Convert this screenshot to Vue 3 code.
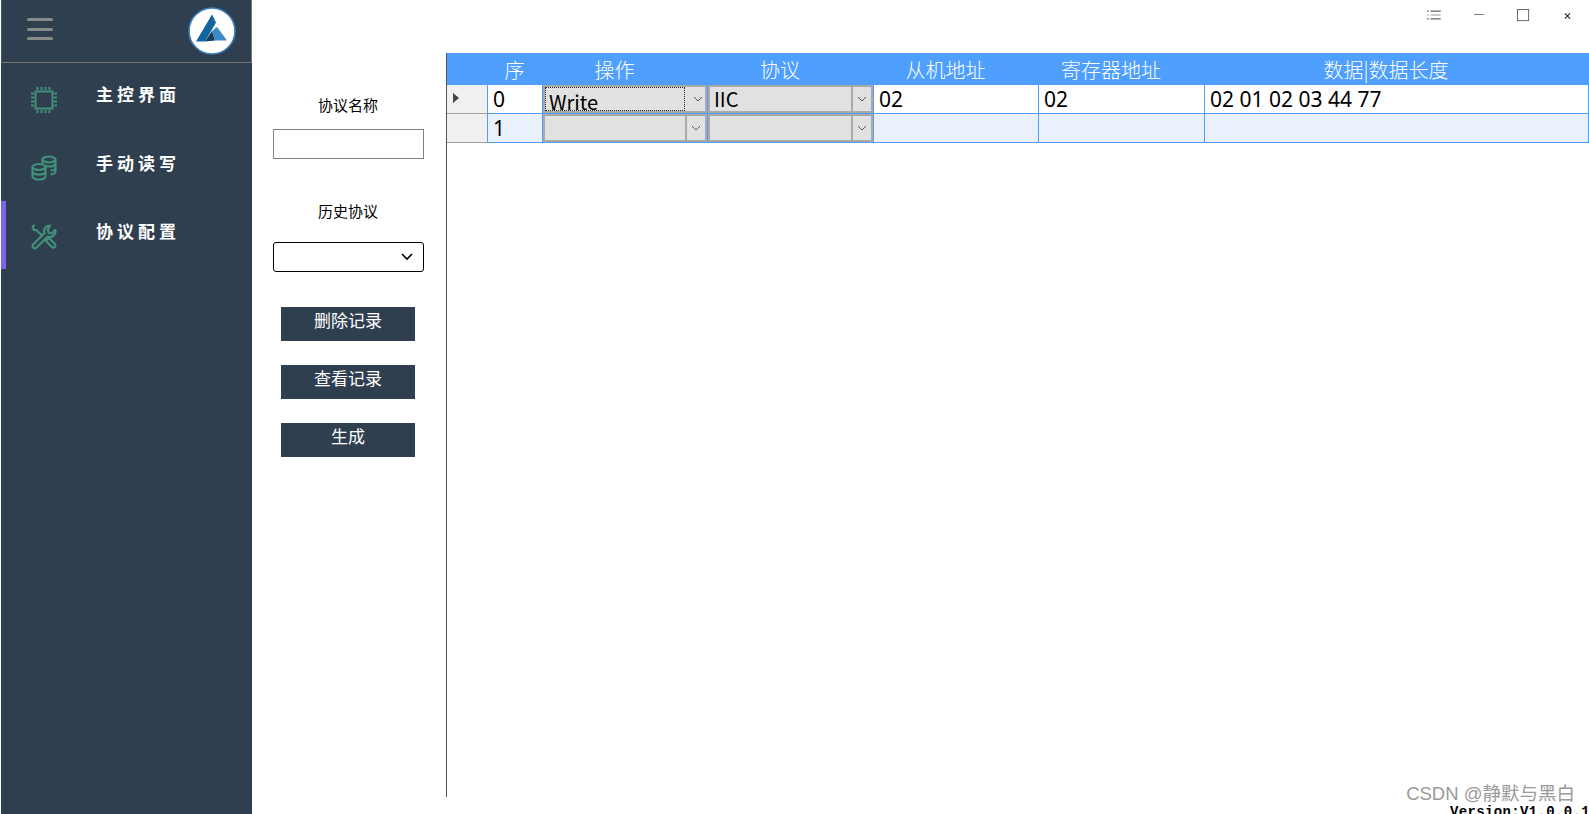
<script setup>
const navItems = [
  { label: '主控界面', icon: 'chip' },
  { label: '手动读写', icon: 'coins' },
  { label: '协议配置', icon: 'tools', active: true }
]
const headers = [
  { text: '', cls: '' },
  { text: '序', cls: 'nudge' },
  { text: '操作', cls: 'shift' },
  { text: '协议', cls: 'shift' },
  { text: '从机地址', cls: 'shift' },
  { text: '寄存器地址', cls: 'shift' },
  { text: '数据|数据长度', cls: 'shift' }
]
const rows = [
  { seq: '0', op: 'Write', proto: 'IIC', slave: '02', reg: '02', data: '02 01 02 03 44 77', current: true },
  { seq: '1', op: '', proto: '', slave: '', reg: '', data: '', current: false }
]
const buttons = ['删除记录', '查看记录', '生成']
const ticks = [6.5, 10.5, 14.5, 18.5]
</script>

<template>
  <div class="app">
    <aside class="sidebar">
      <div class="brand">
        <div class="burger"><i></i><i></i><i></i></div>
        <svg class="logo" viewBox="0 0 48 48" width="48" height="48">
          <circle cx="24" cy="24" r="23" fill="#fff" stroke="#3a80bd" stroke-width="1.6" />
          <polygon points="24,7.500 28,15.500 17,34.500 8,34.500" fill="#14659f" />
          <polygon points="29,20 39,33.500 27,33.500 24,24" fill="#3d88c7" />
          <polygon points="24,24 27,33.500 17,34.500" fill="#123c60" />
        </svg>
      </div>
      <nav>
        <div v-for="item in navItems" :key="item.label" class="nav-item" :class="{ active: item.active }">
          <span class="nav-icon">
            <svg v-if="item.icon === 'chip'" viewBox="0 0 26 26" width="26" height="26" fill="none" stroke="#42917a" stroke-width="2">
              <rect x="4.500" y="4.500" width="17" height="17" />
              <g v-for="t in ticks" :key="t">
                <path :d="`M${t} 0v3M${t} 23v3M0 ${t}h3M23 ${t}h3`" />
              </g>
            </svg>
            <svg v-else-if="item.icon === 'coins'" viewBox="0 0 26 26" width="26" height="26" fill="none" stroke="#42917a" stroke-width="2.200">
              <ellipse cx="18" cy="4.500" rx="6.500" ry="3" />
              <path d="M11.500 4.500v4.500M24.500 4.500v12c0 1.500-2 2.700-5 3M24.500 8.500c0 1.700-3 3-6.500 3-1 0-2-.1-3-.3M24.500 12.500c0 1.700-2.500 3-5 3" />
              <ellipse cx="8" cy="12" rx="6.500" ry="3" />
              <path d="M1.500 12v9.500c0 1.700 3 3 6.500 3s6.500-1.300 6.500-3V12M1.500 16.500c0 1.700 3 3 6.500 3s6.500-1.300 6.500-3" />
            </svg>
            <svg v-else viewBox="0 0 26 26" width="26" height="26" fill="none" stroke="#42917a" stroke-width="2.200" stroke-linejoin="round" stroke-linecap="round">
              <path d="M19 1.500a5.500 5.500 0 0 0-5.500 7.500L2.200 20.500a2.200 2.200 0 0 0 3.200 3.200L16.800 12.500a5.500 5.500 0 0 0 7.500-6.500l-3.500 3.500-3.200-.8-.8-3.200z" />
              <path d="M3 1.500 1.500 3l1.500 3 2.500.2L11 11.500M15 17l3-3 5.800 6a2.100 2.100 0 0 1-3 3z" />
            </svg>
          </span>
          <span class="nav-label">{{ item.label }}</span>
        </div>
      </nav>
    </aside>

    <section class="form-panel">
      <label class="form-label first">协议名称</label>
      <input class="name-input" type="text" />
      <label class="form-label second">历史协议</label>
      <div class="history-select">
        <svg viewBox="0 0 12 8" width="12" height="8" fill="none" stroke="#000" stroke-width="1.600"><path d="M1 1l5 5 5-5" /></svg>
      </div>
      <div class="actions">
        <button v-for="b in buttons" :key="b" class="action" type="button">{{ b }}</button>
      </div>
    </section>

    <main class="main">
      <div class="titlebar">
        <svg viewBox="0 0 16 12" width="16" height="12" fill="none" stroke-width="1">
          <path d="M0 1.500h2M4 1.500h12M0 10.500h2M4 10.500h12" stroke="#222" />
          <path d="M0 6h2M4 6h12" stroke="#bbb" stroke-width="2" />
        </svg>
        <svg viewBox="0 0 12 2" width="12" height="2"><rect width="12" height="1" fill="#666" /></svg>
        <svg viewBox="0 0 15 15" width="15" height="15" fill="none"><rect x=".5" y=".5" width="13" height="13" stroke="#555" /></svg>
        <svg viewBox="0 0 8 8" width="8" height="8" fill="none" stroke="#222" stroke-width="1.200"><path d="M1 1l6 6M7 1l-6 6" /></svg>
      </div>
      <div class="grid-area">
        <div class="grid header-row">
          <div v-for="(h, i) in headers" :key="i" class="head-cell" :class="h.cls">{{ h.text }}</div>
        </div>
        <div v-for="row in rows" :key="row.seq" class="grid body-row" :class="{ alt: !row.current }">
          <div class="row-head" :class="{ current: row.current }">
            <svg v-if="row.current" viewBox="0 0 6 10" width="6" height="10"><path d="M0 0l6 5-6 5z" fill="#444" /></svg>
          </div>
          <div class="cell">{{ row.seq }}</div>
          <div class="combo-cell">
            <div class="combo">
              <span class="combo-text" :class="{ focused: row.current }">{{ row.op }}</span>
              <span class="combo-btn" :class="{ plain: row.current }">
                <svg viewBox="0 0 10 6" width="10" height="6" fill="none" stroke="#555"><path d="M1 1l4 4 4-4" /></svg>
              </span>
            </div>
          </div>
          <div class="combo-cell">
            <div class="combo">
              <span class="combo-text proto">{{ row.proto }}</span>
              <span class="combo-btn">
                <svg viewBox="0 0 10 6" width="10" height="6" fill="none" stroke="#555"><path d="M1 1l4 4 4-4" /></svg>
              </span>
            </div>
          </div>
          <div class="cell">{{ row.slave }}</div>
          <div class="cell">{{ row.reg }}</div>
          <div class="cell">{{ row.data }}</div>
        </div>
      </div>
    </main>

    <div class="watermark">CSDN @静默与黑白</div>
    <div class="version">Version:V1.0.0.1</div>
  </div>
</template>

<style>
html, body { margin: 0; overflow: hidden; background: #fff; }
</style>

<style scoped>
.app {
  position: relative;
  display: flex;
  height: 814px;
  width: 1589px;
  overflow: hidden;
  background: #fff;
  font-family: "Noto Sans CJK SC", "Noto Sans", sans-serif;
  color: #000;
}
.sidebar {
  flex: none;
  width: 251px;
  margin-left: 1px;
  background: #2f3f4f;
}
.brand {
  height: 63px;
  box-sizing: border-box;
  display: flex;
  align-items: center;
  justify-content: space-between;
  padding: 0 15px 4px 25px;
  border-left: 1px solid #4a5866;
  border-right: 1px solid #777;
  border-bottom: 1px solid #777;
}
.burger { display: flex; flex-direction: column; gap: 6.500px; width: 26px; }
.burger i { display: block; height: 3px; border-radius: 2px; background: #8a8a8a; }
.logo { display: block; margin-top: 3px; }
nav { display: flex; flex-direction: column; }
.nav-item {
  height: 68.500px;
  display: flex;
  align-items: center;
  padding-left: 30px;
  position: relative;
}
.nav-item.active::before {
  content: "";
  position: absolute;
  left: 0;
  top: 1px;
  bottom: 0;
  width: 5px;
  background: #7b66e8;
}
.nav-icon { display: flex; width: 26px; height: 26px; margin-top: 5px; }
.nav-label {
  margin-left: 39px;
  margin-top: -7px;
  font-size: 17px;
  font-weight: 700;
  letter-spacing: 4px;
  color: #fff;
  white-space: nowrap;
  font-family: "Liberation Serif", "Noto Sans CJK SC", serif;
}
.form-panel {
  flex: none;
  width: 194px;
  display: flex;
  flex-direction: column;
  align-items: center;
  padding-right: 2px;
  box-sizing: border-box;
}
.form-label { font-size: 15px; line-height: 20px; }
.form-label.first { margin-top: 95px; }
.form-label.second { margin-top: 42px; }
.name-input {
  width: 151px;
  height: 30px;
  box-sizing: border-box;
  margin: 14px 0 0;
  border: 1px solid #808080;
  border-radius: 0;
  outline: none;
  background: #fff;
  padding: 0;
}
.history-select {
  width: 151px;
  height: 30px;
  box-sizing: border-box;
  margin-top: 21px;
  border: 1px solid #000;
  border-radius: 3px;
  display: flex;
  align-items: center;
  justify-content: flex-end;
  padding-right: 10px;
}
.actions { display: flex; flex-direction: column; gap: 24px; margin-top: 35px; }
.action {
  width: 134px;
  height: 34px;
  border: 0;
  padding: 0 0 8px;
  background: #2f3f4f;
  color: #fff;
  font-family: inherit;
  font-size: 17px;
  line-height: 22px;
}
.main {
  flex: 1;
  min-width: 0;
  height: 797px;
  box-sizing: border-box;
  border-left: 1px solid #555;
  display: flex;
  flex-direction: column;
  position: relative;
}
.titlebar {
  height: 53px;
  flex: none;
  display: flex;
  align-items: flex-start;
  background: #fff;
  margin-left: -2px;
  padding: 8px 18px 0 982px;
  box-sizing: border-box;
  gap: 33px;
}
.titlebar svg:nth-child(1) { margin-top: 1px; }
.titlebar svg:nth-child(2) { margin-top: 6px; }
.titlebar svg:nth-child(4) { margin-top: 4px; margin-left: 1px; }
.grid {
  display: grid;
  grid-template-columns: 41px 55px 165px 166px 165px 166px 1fr;
}
.header-row { height: 32px; background: #4f9fff; }
.head-cell {
  color: #fff;
  font-size: 20px;
  font-weight: 300;
  line-height: 34px;
  height: 32px;
  text-align: center;
  white-space: nowrap;
}
.head-cell.shift { padding-right: 22px; }
.head-cell.nudge { padding-right: 2px; }
.body-row { height: 29px; background: #fff; }
.body-row.alt { background: #e8f1fc; }
.row-head {
  background: #f0f0f0;
  border-bottom: 1px solid #a0a0a0;
  border-right: 1px solid #4f9fff;
  display: flex;
  align-items: center;
  padding-left: 6px;
  box-sizing: border-box;
}
.row-head.current { padding-bottom: 2px; }
.cell {
  box-sizing: border-box;
  border-right: 1px solid #4f9fff;
  border-bottom: 1px solid #4f9fff;
  padding-left: 5px;
  line-height: 29px;
  height: 29px;
  font-family: "Noto Sans", "Noto Sans CJK SC", sans-serif;
  font-size: 21px;
  white-space: nowrap;
}
.combo-cell {
  box-sizing: border-box;
  border-right: 1px solid #4f9fff;
  border-bottom: 1px solid #4f9fff;
  background: inherit;
}
.combo {
  box-sizing: border-box;
  height: 28px;
  border: 2px solid #a9a9a9;
  background: #e1e1e1;
  display: flex;
  align-items: stretch;
}
.combo-text {
  flex: 1;
  box-sizing: border-box;
  padding-left: 4px;
  font-family: "Noto Sans CJK SC", "Noto Sans", sans-serif;
  font-size: 20px;
  line-height: 24px;
  white-space: nowrap;
}
.combo-text.focused {
  outline: 1px dotted #222;
  outline-offset: -1px;
  margin: 0 4px 0 0;
  padding: 3px 0 0 4px;
}
.combo-btn {
  flex: none;
  width: 20px;
  box-sizing: border-box;
  border-left: 2px solid #a9a9a9;
  display: flex;
  align-items: center;
  justify-content: center;
}
.combo-btn.plain { border-left-color: transparent; width: 16px; }
.watermark {
  position: absolute;
  right: 14px;
  bottom: 8px;
  font-family: "Liberation Sans", "Noto Sans CJK SC", sans-serif;
  font-size: 18.500px;
  line-height: 24px;
  color: #9a9a9a;
  white-space: nowrap;
}
.version {
  position: absolute;
  left: 1450px;
  top: 804px;
  font-family: "Liberation Mono", "DejaVu Sans Mono", monospace;
  font-weight: 700;
  font-size: 14px;
  line-height: 16px;
  letter-spacing: .35px;
  white-space: nowrap;
  color: #000;
}
</style>
